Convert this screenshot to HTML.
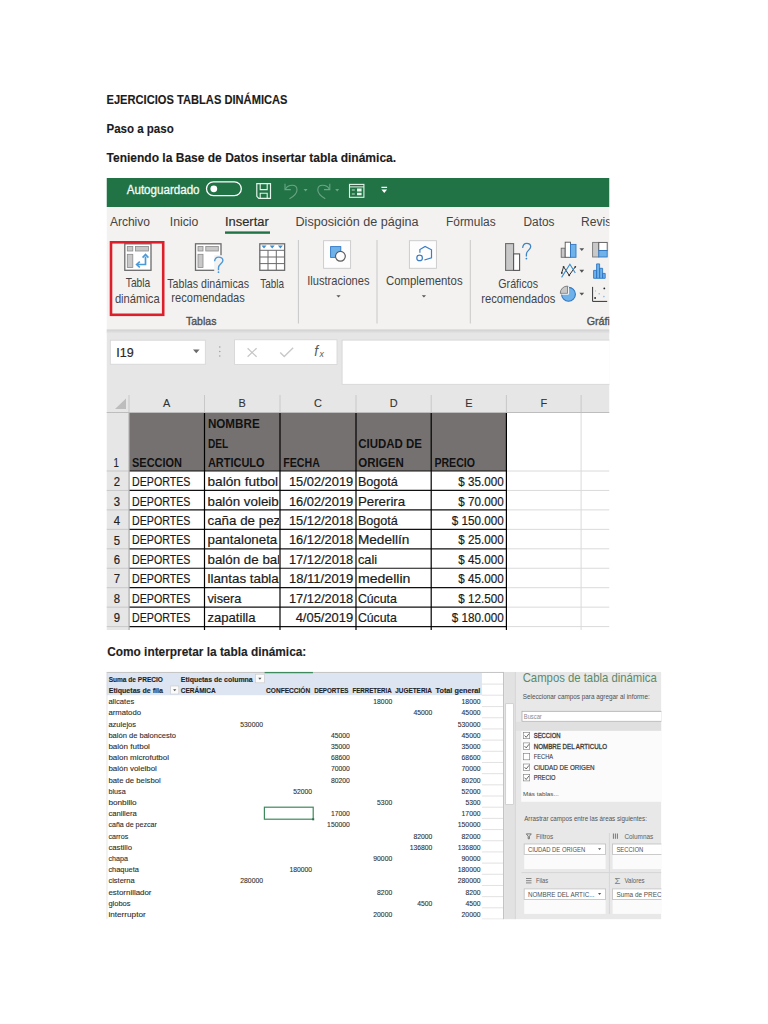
<!DOCTYPE html>
<html><head><meta charset="utf-8"><title>Tablas dinámicas</title>
<style>
html,body{margin:0;padding:0;background:#fff;width:768px;height:1024px;overflow:hidden}
svg{display:block}
text{font-family:"Liberation Sans",sans-serif}
</style></head><body>
<svg width="768" height="1024" viewBox="0 0 768 1024">
<defs><linearGradient id="shd" x1="0" y1="0" x2="0" y2="1"><stop offset="0" stop-color="#d0d0d0"/><stop offset="1" stop-color="#e6e6e6"/></linearGradient></defs>
<text x="106.50" y="104.20" font-size="12.94" fill="#1b1b1b" stroke="#1b1b1b" stroke-width="0.12" font-weight="bold" textLength="181.00" lengthAdjust="spacingAndGlyphs">EJERCICIOS TABLAS DINÁMICAS</text>
<text x="106.50" y="133.20" font-size="12.50" fill="#1b1b1b" stroke="#1b1b1b" stroke-width="0.12" font-weight="bold" textLength="67.20" lengthAdjust="spacingAndGlyphs">Paso a paso</text>
<text x="106.50" y="161.90" font-size="12.50" fill="#1b1b1b" stroke="#1b1b1b" stroke-width="0.12" font-weight="bold" textLength="289.60" lengthAdjust="spacingAndGlyphs">Teniendo la Base de Datos insertar tabla dinámica.</text>
<text x="107.20" y="655.90" font-size="13.23" fill="#222222" stroke="#222222" stroke-width="0.12" font-weight="bold" textLength="199.10" lengthAdjust="spacingAndGlyphs">Como interpretar la tabla dinámica:</text>
<g id="xl">
<clipPath id="c1"><rect x="106.5" y="178" width="503.0" height="452"/></clipPath>
<g clip-path="url(#c1)">
<rect x="106.50" y="178.00" width="503.00" height="29.00" fill="#217346"/>
<text x="126.70" y="193.75" font-size="12.21" fill="#f4fbf6" textLength="72.90" lengthAdjust="spacingAndGlyphs" stroke="#f4fbf6" stroke-width="0.3">Autoguardado</text>
<rect x="206.50" y="181.90" width="34.80" height="13.70" fill="none" stroke="#fff" stroke-width="1.3" rx="6.85"/>
<circle cx="213.8" cy="188.8" r="3.4" fill="#fff"/>
<path d="M256.8 183.7 h13.7 v14.6 h-11.7 l-2 -2z" fill="none" stroke="#e4f5e9" stroke-width="1.2"/>
<path d="M260.2 183.7 v5.9 h7 v-5.9 M260.2 198.3 v-5 h7 v5" fill="none" stroke="#e4f5e9" stroke-width="1.1"/>
<g fill="none" stroke="#6aa584" stroke-width="1.1">
<path d="M285 183.8 V189.6 H290.8"/><path d="M285.4 189.2 C288 184.2 297 183.5 297 190 C297 193.5 293.5 196.5 289.5 198.8"/>
<path d="M329.8 183.8 V189.6 H324"/><path d="M329.4 189.2 C326.8 184.2 317.8 183.5 317.8 190 C317.8 193.5 321.3 196.5 325.3 198.8"/>
</g>
<path d="M303.6 189 h4 l-2 2.4z M335.2 189 h4 l-2 2.4z" fill="#6aa584"/>
<rect x="349.5" y="184.4" width="14.4" height="12.9" fill="none" stroke="#e4f5e9" stroke-width="1.1"/>
<path d="M349.5 186.9 h14.4" stroke="#e4f5e9" stroke-width="1"/>
<path d="M351.8 190 h3 M351.8 194 h3" stroke="#c5e3cf" stroke-width="1.1"/>
<path d="M357 188.6 h4.6 v2.8 h-4.6z M357 192.7 h4.6 v2.6 h-4.6z" fill="#e4f5e9"/>
<path d="M381.4 187.4 h5.7" stroke="#fff" stroke-width="1.1"/><path d="M381.4 189.5 h5.7 l-2.85 3.6z" fill="#fff"/>
<rect x="106.50" y="207.00" width="503.00" height="122.50" fill="#f3f2f1"/>
<text x="109.90" y="226.00" font-size="13.23" fill="#444444" textLength="40.10" lengthAdjust="spacingAndGlyphs">Archivo</text>
<text x="169.80" y="226.00" font-size="13.23" fill="#444444" textLength="28.60" lengthAdjust="spacingAndGlyphs">Inicio</text>
<text x="225.00" y="226.00" font-size="13.23" fill="#2b2b2b" textLength="43.70" lengthAdjust="spacingAndGlyphs" stroke="#2b2b2b" stroke-width="0.15">Insertar</text>
<rect x="225.00" y="231.40" width="45.00" height="2.40" fill="#217346"/>
<text x="295.50" y="226.00" font-size="13.23" fill="#444444" textLength="123.10" lengthAdjust="spacingAndGlyphs">Disposición de página</text>
<text x="446.00" y="226.00" font-size="13.23" fill="#444444" textLength="49.60" lengthAdjust="spacingAndGlyphs">Fórmulas</text>
<text x="523.50" y="226.00" font-size="13.23" fill="#444444" textLength="31.00" lengthAdjust="spacingAndGlyphs">Datos</text>
<text x="581.00" y="226.00" font-size="13.23" fill="#444444" textLength="41.00" lengthAdjust="spacingAndGlyphs">Revisar</text>
<rect x="124.80" y="243.80" width="26.20" height="26.50" fill="#fff" stroke="#6b6b6b" stroke-width="1.3"/>
<rect x="127.30" y="246.40" width="5.50" height="4.60" fill="#c8c8c8" stroke="#8a8a8a" stroke-width="0.8"/>
<rect x="135.40" y="246.40" width="13.10" height="4.60" fill="#c8c8c8" stroke="#8a8a8a" stroke-width="0.8"/>
<rect x="127.30" y="254.30" width="5.50" height="13.20" fill="#c8c8c8" stroke="#8a8a8a" stroke-width="0.8"/>
<path d="M137 264.5 h8.5 v-8" fill="none" stroke="#4a9ad8" stroke-width="1.7"/>
<path d="M142.6 257.6 l2.9 -3.2 l2.9 3.2 M139.8 261.6 l-3.2 2.9 l3.2 2.9" fill="none" stroke="#4a9ad8" stroke-width="1.6"/>
<text x="125.80" y="287.00" font-size="12.06" fill="#444444" textLength="24.50" lengthAdjust="spacingAndGlyphs">Tabla</text>
<text x="114.90" y="302.50" font-size="12.06" fill="#444444" textLength="44.80" lengthAdjust="spacingAndGlyphs">dinámica</text>
<rect x="111.00" y="242.30" width="52.20" height="72.50" fill="none" stroke="#dc1f2a" stroke-width="2.6"/>
<rect x="195.50" y="243.80" width="25.50" height="26.50" fill="#fff" stroke="#6b6b6b" stroke-width="1.3"/>
<rect x="198.00" y="246.40" width="5.00" height="4.60" fill="#c8c8c8" stroke="#8a8a8a" stroke-width="0.8"/>
<rect x="205.80" y="246.40" width="12.50" height="4.60" fill="#c8c8c8" stroke="#8a8a8a" stroke-width="0.8"/>
<rect x="198.00" y="254.30" width="5.00" height="13.20" fill="#c8c8c8" stroke="#8a8a8a" stroke-width="0.8"/>
<rect x="214.20" y="255.20" width="9.00" height="16.00" fill="#f3f2f1"/>
<path d="M214.6 261.3 C214.9 258.3 216.6 257.1 218.6 257.1 C221 257.1 222.9 258.6 222.9 260.6 C222.9 263.4 218.5 264.4 218.5 267.7 V270.2" fill="none" stroke="#4a98d8" stroke-width="1.4"/>
<circle cx="218.5" cy="272.2" r="0.9" fill="#4a98d8"/>
<text x="167.30" y="287.50" font-size="12.06" fill="#444444" textLength="81.70" lengthAdjust="spacingAndGlyphs">Tablas dinámicas</text>
<text x="171.30" y="302.40" font-size="12.06" fill="#444444" textLength="73.50" lengthAdjust="spacingAndGlyphs">recomendadas</text>
<rect x="259.80" y="243.80" width="24.80" height="26.50" fill="#fff" stroke="#6b6b6b" stroke-width="1.3"/>
<path d="M259.8 250.3 h24.8 M259.8 257 h24.8 M259.8 263.6 h24.8 M268 250.3 v20 M276.3 250.3 v20" stroke="#6b6b6b" stroke-width="1"/>
<path d="M261.5 245.5 h5 l-2.5 3z M269.7 245.5 h5 l-2.5 3z M277.9 245.5 h5 l-2.5 3z" fill="#3a8fd0"/>
<text x="260.30" y="287.50" font-size="12.06" fill="#444444" textLength="23.70" lengthAdjust="spacingAndGlyphs">Tabla</text>
<text x="186.00" y="324.60" font-size="11.19" fill="#505050" textLength="30.40" lengthAdjust="spacingAndGlyphs" stroke="#505050" stroke-width="0.35">Tablas</text>
<line x1="298.40" y1="240.00" x2="298.40" y2="323.50" stroke="#c8c8c8" stroke-width="1" />
<line x1="377.00" y1="240.00" x2="377.00" y2="323.50" stroke="#c8c8c8" stroke-width="1" />
<line x1="470.30" y1="240.00" x2="470.30" y2="323.50" stroke="#c8c8c8" stroke-width="1" />
<rect x="323.60" y="240.70" width="27.00" height="27.60" fill="#fdfdfd" stroke="#c9c9c9" stroke-width="0.9"/>
<rect x="330.60" y="246.60" width="10.20" height="10.80" fill="#6fb2ea" stroke="#2f78c4" stroke-width="0.9"/>
<circle cx="340.4" cy="256.3" r="4.9" fill="#fdfdfd" stroke="#5c5c5c" stroke-width="1.2"/>
<text x="307.20" y="285.40" font-size="12.06" fill="#444444" textLength="62.30" lengthAdjust="spacingAndGlyphs">Ilustraciones</text>
<path d="M336.4 295.2 h4.2 l-2.1 2.4z" fill="#555"/>
<rect x="409.40" y="240.70" width="27.00" height="27.60" fill="#fdfdfd" stroke="#c9c9c9" stroke-width="0.9"/>
<path d="M419.9 252.7 V249.5 L425.1 246.4 L431.5 249.8 V257.9 L424.4 260" fill="none" stroke="#3b7cc4" stroke-width="1.2"/>
<circle cx="419.6" cy="257.9" r="2.8" fill="none" stroke="#3b7cc4" stroke-width="1.2"/>
<text x="385.90" y="285.40" font-size="12.06" fill="#444444" textLength="76.70" lengthAdjust="spacingAndGlyphs">Complementos</text>
<path d="M421.8 295.2 h4.2 l-2.1 2.4z" fill="#555"/>
<rect x="505.60" y="243.60" width="8.00" height="26.80" fill="#c8c8c8" stroke="#6b6b6b" stroke-width="1.1"/>
<rect x="513.60" y="253.90" width="6.00" height="16.50" fill="#fff" stroke="#555" stroke-width="1.1"/>
<path d="M522.6 247.9 C523 244.5 525 243.3 526.7 243.3 C529 243.3 530.7 244.8 530.7 246.8 C530.7 249.6 526.4 250.8 526.4 254 V256.4" fill="none" stroke="#3d85c6" stroke-width="1.3"/>
<circle cx="526.4" cy="258.6" r="0.9" fill="#3d85c6"/>
<text x="498.30" y="287.50" font-size="12.06" fill="#444444" textLength="39.70" lengthAdjust="spacingAndGlyphs">Gráficos</text>
<text x="481.30" y="302.60" font-size="12.06" fill="#444444" textLength="74.00" lengthAdjust="spacingAndGlyphs">recomendados</text>
<rect x="561.20" y="248.20" width="4.00" height="9.10" fill="#c8c8c8" stroke="#6b6b6b" stroke-width="0.9"/>
<rect x="565.20" y="242.20" width="5.30" height="15.10" fill="#ffffff" stroke="#555555" stroke-width="0.9"/>
<rect x="570.50" y="244.40" width="5.50" height="12.90" fill="#6fb2ea" stroke="#2f78c4" stroke-width="0.9"/>
<path d="M579.4 248.2 h4.8 l-2.4 2.9z M579.4 269.8 h4.8 l-2.4 2.9z M579.4 292.7 h4.8 l-2.4 2.9z" fill="#555"/>
<path d="M561.6 273 L563.6 266.8 L569.2 275.3 L575.3 266.8" fill="none" stroke="#333" stroke-width="1"/>
<path d="M561.6 277.4 L569.9 264.3 L575.3 273" fill="none" stroke="#3a8fd0" stroke-width="1.1"/>
<circle cx="561.8" cy="273" r="0.9" fill="#333"/><circle cx="563.6" cy="266.8" r="0.9" fill="#333"/><circle cx="569.2" cy="275.3" r="0.9" fill="#333"/><circle cx="575.3" cy="266.8" r="0.9" fill="#333"/>
<circle cx="568.5" cy="294.3" r="6.9" fill="#6fb2ea" stroke="#2f78c4" stroke-width="1.1"/>
<path d="M567.6 293.4 v-7.3 a7 7 0 0 0 -7.3 7.3z" fill="#c8c8c8" stroke="#777" stroke-width="0.9"/>
<path d="M568.5 294.3 v-7.2 M568.5 294.3 h-7.2" stroke="#f3f2f1" stroke-width="1.1"/>
<rect x="592.60" y="242.40" width="6.20" height="14.60" fill="#c8c8c8" stroke="#777" stroke-width="0.9"/>
<rect x="598.80" y="242.40" width="8.40" height="8.10" fill="#ffffff" stroke="#555" stroke-width="0.9"/>
<rect x="598.80" y="250.50" width="8.40" height="6.50" fill="#6fb2ea" stroke="#2f78c4" stroke-width="0.9"/>
<path d="M593.6 278.3 v-7.9 h3 v7.9z M596.6 278.3 v-14.4 h3 v14.4z M599.6 278.3 v-10 h3 v10z M602.6 278.3 v-4.9 h2.6 v4.9z" fill="#6fb2ea" stroke="#2f78c4" stroke-width="0.9"/>
<path d="M592.6 286.9 v14.5 h14.6" fill="none" stroke="#333" stroke-width="1"/>
<circle cx="595.1" cy="298" r="0.9" fill="#222"/><circle cx="604.3" cy="288.4" r="0.9" fill="#222"/><circle cx="599.2" cy="293.8" r="0.8" fill="#8ab8e0"/><circle cx="603.9" cy="296.6" r="0.8" fill="#8ab8e0"/><circle cx="595.5" cy="291" r="0.7" fill="#a8c8e8"/>
<text x="586.70" y="324.70" font-size="11.19" fill="#505050" textLength="40.00" lengthAdjust="spacingAndGlyphs" stroke="#505050" stroke-width="0.35">Gráficos</text>
<rect x="106.50" y="329.50" width="503.00" height="64.00" fill="#e6e6e6"/>
<rect x="106.5" y="329.5" width="503.0" height="4" fill="url(#shd)"/>
<rect x="110.30" y="340.20" width="95.00" height="24.00" fill="#ffffff" stroke="#d4d4d4" stroke-width="0.8"/>
<text x="116.30" y="357.00" font-size="12.21" fill="#2a2a2a" textLength="17.40" lengthAdjust="spacingAndGlyphs" stroke="#2a2a2a" stroke-width="0.2">I19</text>
<path d="M193 349.6 h6.6 l-3.3 3.6z" fill="#6a6a6a"/>
<circle cx="219.8" cy="347" r="0.7" fill="#999"/>
<circle cx="219.8" cy="351.5" r="0.7" fill="#999"/>
<circle cx="219.8" cy="356" r="0.7" fill="#999"/>
<rect x="234.60" y="339.80" width="102.40" height="24.70" fill="#ffffff" stroke="#d4d4d4" stroke-width="0.8"/>
<path d="M247.6 348.2 l9 8.6 M256.6 348.2 l-9 8.6" stroke="#c6c6c6" stroke-width="1.2"/>
<path d="M280.2 352.6 l4 4 l9 -8.8" fill="none" stroke="#c8c8c8" stroke-width="1.4"/>
<text x="314.30" y="356.30" font-size="13.81" fill="#5a5a5a" font-style="italic" font-family="Liberation Serif">f</text>
<text x="319.60" y="356.60" font-size="8.72" fill="#5a5a5a" font-style="italic" font-family="Liberation Serif">x</text>
<rect x="342.10" y="340.10" width="270.00" height="44.20" fill="#ffffff" stroke="#d4d4d4" stroke-width="0.8"/>
<rect x="106.50" y="393.00" width="503.00" height="20.00" fill="#e6e6e6"/>
<path d="M115 409 l11 -10.5 v10.5z" fill="#bdbdbd"/>
<text x="166.75" y="407.20" font-size="10.90" fill="#333" text-anchor="middle" stroke="#333" stroke-width="0.1">A</text>
<text x="242.25" y="407.20" font-size="10.90" fill="#333" text-anchor="middle" stroke="#333" stroke-width="0.1">B</text>
<text x="318.00" y="407.20" font-size="10.90" fill="#333" text-anchor="middle" stroke="#333" stroke-width="0.1">C</text>
<text x="393.60" y="407.20" font-size="10.90" fill="#333" text-anchor="middle" stroke="#333" stroke-width="0.1">D</text>
<text x="468.80" y="407.20" font-size="10.90" fill="#333" text-anchor="middle" stroke="#333" stroke-width="0.1">E</text>
<text x="543.75" y="407.20" font-size="10.90" fill="#333" text-anchor="middle" stroke="#333" stroke-width="0.1">F</text>
<text x="618.55" y="407.20" font-size="10.90" fill="#333" text-anchor="middle" stroke="#333" stroke-width="0.1">G</text>
<line x1="129.00" y1="395.00" x2="129.00" y2="413.00" stroke="#c8c8c8" stroke-width="1" />
<line x1="204.50" y1="395.00" x2="204.50" y2="413.00" stroke="#c8c8c8" stroke-width="1" />
<line x1="280.00" y1="395.00" x2="280.00" y2="413.00" stroke="#c8c8c8" stroke-width="1" />
<line x1="356.00" y1="395.00" x2="356.00" y2="413.00" stroke="#c8c8c8" stroke-width="1" />
<line x1="431.20" y1="395.00" x2="431.20" y2="413.00" stroke="#c8c8c8" stroke-width="1" />
<line x1="506.40" y1="395.00" x2="506.40" y2="413.00" stroke="#c8c8c8" stroke-width="1" />
<line x1="581.10" y1="395.00" x2="581.10" y2="413.00" stroke="#c8c8c8" stroke-width="1" />
<line x1="106.50" y1="412.50" x2="609.50" y2="412.50" stroke="#bdbdbd" stroke-width="1" />
<rect x="106.50" y="413.00" width="22.50" height="217.00" fill="#e6e6e6"/>
<line x1="129.00" y1="413.00" x2="129.00" y2="630.00" stroke="#c8c8c8" stroke-width="1" />
<rect x="129.00" y="413.00" width="480.50" height="217.00" fill="#ffffff"/>
<line x1="506.40" y1="471.00" x2="609.50" y2="471.00" stroke="#dadada" stroke-width="1" />
<line x1="106.50" y1="471.00" x2="129.00" y2="471.00" stroke="#c8c8c8" stroke-width="1" />
<line x1="506.40" y1="490.45" x2="609.50" y2="490.45" stroke="#dadada" stroke-width="1" />
<line x1="106.50" y1="490.45" x2="129.00" y2="490.45" stroke="#c8c8c8" stroke-width="1" />
<line x1="506.40" y1="509.90" x2="609.50" y2="509.90" stroke="#dadada" stroke-width="1" />
<line x1="106.50" y1="509.90" x2="129.00" y2="509.90" stroke="#c8c8c8" stroke-width="1" />
<line x1="506.40" y1="529.35" x2="609.50" y2="529.35" stroke="#dadada" stroke-width="1" />
<line x1="106.50" y1="529.35" x2="129.00" y2="529.35" stroke="#c8c8c8" stroke-width="1" />
<line x1="506.40" y1="548.80" x2="609.50" y2="548.80" stroke="#dadada" stroke-width="1" />
<line x1="106.50" y1="548.80" x2="129.00" y2="548.80" stroke="#c8c8c8" stroke-width="1" />
<line x1="506.40" y1="568.25" x2="609.50" y2="568.25" stroke="#dadada" stroke-width="1" />
<line x1="106.50" y1="568.25" x2="129.00" y2="568.25" stroke="#c8c8c8" stroke-width="1" />
<line x1="506.40" y1="587.70" x2="609.50" y2="587.70" stroke="#dadada" stroke-width="1" />
<line x1="106.50" y1="587.70" x2="129.00" y2="587.70" stroke="#c8c8c8" stroke-width="1" />
<line x1="506.40" y1="607.15" x2="609.50" y2="607.15" stroke="#dadada" stroke-width="1" />
<line x1="106.50" y1="607.15" x2="129.00" y2="607.15" stroke="#c8c8c8" stroke-width="1" />
<line x1="506.40" y1="626.60" x2="609.50" y2="626.60" stroke="#dadada" stroke-width="1" />
<line x1="106.50" y1="626.60" x2="129.00" y2="626.60" stroke="#c8c8c8" stroke-width="1" />
<line x1="506.40" y1="646.05" x2="609.50" y2="646.05" stroke="#dadada" stroke-width="1" />
<line x1="106.50" y1="646.05" x2="129.00" y2="646.05" stroke="#c8c8c8" stroke-width="1" />
<line x1="581.10" y1="413.00" x2="581.10" y2="630.00" stroke="#dadada" stroke-width="1" />
<rect x="129.00" y="413.00" width="377.40" height="58.00" fill="#767171"/>
<text x="132.00" y="466.80" font-size="12.35" fill="#111" font-weight="bold" textLength="50.00" lengthAdjust="spacingAndGlyphs">SECCION</text>
<text x="207.90" y="428.00" font-size="12.35" fill="#111" font-weight="bold" textLength="51.80" lengthAdjust="spacingAndGlyphs">NOMBRE</text>
<text x="207.90" y="447.70" font-size="12.35" fill="#111" font-weight="bold" textLength="20.30" lengthAdjust="spacingAndGlyphs">DEL</text>
<text x="207.90" y="467.00" font-size="12.35" fill="#111" font-weight="bold" textLength="56.70" lengthAdjust="spacingAndGlyphs">ARTICULO</text>
<text x="283.30" y="467.00" font-size="12.35" fill="#111" font-weight="bold" textLength="36.50" lengthAdjust="spacingAndGlyphs">FECHA</text>
<text x="358.30" y="447.70" font-size="12.35" fill="#111" font-weight="bold" textLength="63.60" lengthAdjust="spacingAndGlyphs">CIUDAD DE</text>
<text x="358.30" y="467.00" font-size="12.35" fill="#111" font-weight="bold" textLength="45.40" lengthAdjust="spacingAndGlyphs">ORIGEN</text>
<text x="434.40" y="467.00" font-size="12.35" fill="#111" font-weight="bold" textLength="40.60" lengthAdjust="spacingAndGlyphs">PRECIO</text>
<text x="113.50" y="466.80" font-size="12.06" fill="#222222" textLength="5.40" lengthAdjust="spacingAndGlyphs" stroke="#222" stroke-width="0.15">1</text>
<clipPath id="cB"><rect x="204.5" y="413" width="74.5" height="217"/></clipPath>
<text x="113.70" y="486.20" font-size="12.06" fill="#222222" stroke="#222222" stroke-width="0.18" textLength="6.30" lengthAdjust="spacingAndGlyphs" stroke="#222" stroke-width="0.15">2</text>
<text x="132.10" y="486.10" font-size="12.14" fill="#1a1a1a" stroke="#1a1a1a" stroke-width="0.18" textLength="58.30" lengthAdjust="spacingAndGlyphs">DEPORTES</text>
<g clip-path="url(#cB)">
<text x="207.50" y="486.10" font-size="12.14" fill="#1a1a1a" stroke="#1a1a1a" stroke-width="0.18" textLength="70.60" lengthAdjust="spacingAndGlyphs">balón futbol</text>
</g>
<text x="353.20" y="486.10" font-size="12.14" fill="#1a1a1a" stroke="#1a1a1a" stroke-width="0.18" text-anchor="end" textLength="64.30" lengthAdjust="spacingAndGlyphs">15/02/2019</text>
<text x="357.90" y="486.10" font-size="12.14" fill="#1a1a1a" stroke="#1a1a1a" stroke-width="0.18" textLength="40.00" lengthAdjust="spacingAndGlyphs">Bogotá</text>
<text x="503.75" y="486.10" font-size="12.14" fill="#1a1a1a" stroke="#1a1a1a" stroke-width="0.18" text-anchor="end" textLength="45.40" lengthAdjust="spacingAndGlyphs">$ 35.000</text>
<text x="113.70" y="505.65" font-size="12.06" fill="#222222" stroke="#222222" stroke-width="0.18" textLength="6.30" lengthAdjust="spacingAndGlyphs" stroke="#222" stroke-width="0.15">3</text>
<text x="132.10" y="505.55" font-size="12.14" fill="#1a1a1a" stroke="#1a1a1a" stroke-width="0.18" textLength="58.30" lengthAdjust="spacingAndGlyphs">DEPORTES</text>
<g clip-path="url(#cB)">
<text x="207.50" y="505.55" font-size="12.14" fill="#1a1a1a" stroke="#1a1a1a" stroke-width="0.18" textLength="81.65" lengthAdjust="spacingAndGlyphs">balón voleibol</text>
</g>
<text x="353.20" y="505.55" font-size="12.14" fill="#1a1a1a" stroke="#1a1a1a" stroke-width="0.18" text-anchor="end" textLength="64.30" lengthAdjust="spacingAndGlyphs">16/02/2019</text>
<text x="357.90" y="505.55" font-size="12.14" fill="#1a1a1a" stroke="#1a1a1a" stroke-width="0.18" textLength="47.30" lengthAdjust="spacingAndGlyphs">Pererira</text>
<text x="503.75" y="505.55" font-size="12.14" fill="#1a1a1a" stroke="#1a1a1a" stroke-width="0.18" text-anchor="end" textLength="45.40" lengthAdjust="spacingAndGlyphs">$ 70.000</text>
<text x="113.70" y="525.10" font-size="12.06" fill="#222222" stroke="#222222" stroke-width="0.18" textLength="6.30" lengthAdjust="spacingAndGlyphs" stroke="#222" stroke-width="0.15">4</text>
<text x="132.10" y="525.00" font-size="12.14" fill="#1a1a1a" stroke="#1a1a1a" stroke-width="0.18" textLength="58.30" lengthAdjust="spacingAndGlyphs">DEPORTES</text>
<g clip-path="url(#cB)">
<text x="207.50" y="525.00" font-size="12.14" fill="#1a1a1a" stroke="#1a1a1a" stroke-width="0.18" textLength="91.29" lengthAdjust="spacingAndGlyphs">caña de pezcar</text>
</g>
<text x="353.20" y="525.00" font-size="12.14" fill="#1a1a1a" stroke="#1a1a1a" stroke-width="0.18" text-anchor="end" textLength="64.30" lengthAdjust="spacingAndGlyphs">15/12/2018</text>
<text x="357.90" y="525.00" font-size="12.14" fill="#1a1a1a" stroke="#1a1a1a" stroke-width="0.18" textLength="40.00" lengthAdjust="spacingAndGlyphs">Bogotá</text>
<text x="503.75" y="525.00" font-size="12.14" fill="#1a1a1a" stroke="#1a1a1a" stroke-width="0.18" text-anchor="end" textLength="52.00" lengthAdjust="spacingAndGlyphs">$ 150.000</text>
<text x="113.70" y="544.55" font-size="12.06" fill="#222222" stroke="#222222" stroke-width="0.18" textLength="6.30" lengthAdjust="spacingAndGlyphs" stroke="#222" stroke-width="0.15">5</text>
<text x="132.10" y="544.45" font-size="12.14" fill="#1a1a1a" stroke="#1a1a1a" stroke-width="0.18" textLength="58.30" lengthAdjust="spacingAndGlyphs">DEPORTES</text>
<g clip-path="url(#cB)">
<text x="207.50" y="544.45" font-size="12.14" fill="#1a1a1a" stroke="#1a1a1a" stroke-width="0.18" textLength="69.80" lengthAdjust="spacingAndGlyphs">pantaloneta</text>
</g>
<text x="353.20" y="544.45" font-size="12.14" fill="#1a1a1a" stroke="#1a1a1a" stroke-width="0.18" text-anchor="end" textLength="64.30" lengthAdjust="spacingAndGlyphs">16/12/2018</text>
<text x="357.90" y="544.45" font-size="12.14" fill="#1a1a1a" stroke="#1a1a1a" stroke-width="0.18" textLength="51.50" lengthAdjust="spacingAndGlyphs">Medellín</text>
<text x="503.75" y="544.45" font-size="12.14" fill="#1a1a1a" stroke="#1a1a1a" stroke-width="0.18" text-anchor="end" textLength="45.40" lengthAdjust="spacingAndGlyphs">$ 25.000</text>
<text x="113.70" y="564.00" font-size="12.06" fill="#222222" stroke="#222222" stroke-width="0.18" textLength="6.30" lengthAdjust="spacingAndGlyphs" stroke="#222" stroke-width="0.15">6</text>
<text x="132.10" y="563.90" font-size="12.14" fill="#1a1a1a" stroke="#1a1a1a" stroke-width="0.18" textLength="58.30" lengthAdjust="spacingAndGlyphs">DEPORTES</text>
<g clip-path="url(#cB)">
<text x="207.50" y="563.90" font-size="12.14" fill="#1a1a1a" stroke="#1a1a1a" stroke-width="0.18" textLength="119.51" lengthAdjust="spacingAndGlyphs">balón de baloncesto</text>
</g>
<text x="353.20" y="563.90" font-size="12.14" fill="#1a1a1a" stroke="#1a1a1a" stroke-width="0.18" text-anchor="end" textLength="64.30" lengthAdjust="spacingAndGlyphs">17/12/2018</text>
<text x="357.90" y="563.90" font-size="12.14" fill="#1a1a1a" stroke="#1a1a1a" stroke-width="0.18" textLength="19.20" lengthAdjust="spacingAndGlyphs">cali</text>
<text x="503.75" y="563.90" font-size="12.14" fill="#1a1a1a" stroke="#1a1a1a" stroke-width="0.18" text-anchor="end" textLength="45.40" lengthAdjust="spacingAndGlyphs">$ 45.000</text>
<text x="113.70" y="583.45" font-size="12.06" fill="#222222" stroke="#222222" stroke-width="0.18" textLength="6.30" lengthAdjust="spacingAndGlyphs" stroke="#222" stroke-width="0.15">7</text>
<text x="132.10" y="583.35" font-size="12.14" fill="#1a1a1a" stroke="#1a1a1a" stroke-width="0.18" textLength="58.30" lengthAdjust="spacingAndGlyphs">DEPORTES</text>
<g clip-path="url(#cB)">
<text x="207.50" y="583.35" font-size="12.14" fill="#1a1a1a" stroke="#1a1a1a" stroke-width="0.18" textLength="77.92" lengthAdjust="spacingAndGlyphs">llantas tablas</text>
</g>
<text x="353.20" y="583.35" font-size="12.14" fill="#1a1a1a" stroke="#1a1a1a" stroke-width="0.18" text-anchor="end" textLength="64.30" lengthAdjust="spacingAndGlyphs">18/11/2019</text>
<text x="357.90" y="583.35" font-size="12.14" fill="#1a1a1a" stroke="#1a1a1a" stroke-width="0.18" textLength="52.50" lengthAdjust="spacingAndGlyphs">medellin</text>
<text x="503.75" y="583.35" font-size="12.14" fill="#1a1a1a" stroke="#1a1a1a" stroke-width="0.18" text-anchor="end" textLength="45.40" lengthAdjust="spacingAndGlyphs">$ 45.000</text>
<text x="113.70" y="602.90" font-size="12.06" fill="#222222" stroke="#222222" stroke-width="0.18" textLength="6.30" lengthAdjust="spacingAndGlyphs" stroke="#222" stroke-width="0.15">8</text>
<text x="132.10" y="602.80" font-size="12.14" fill="#1a1a1a" stroke="#1a1a1a" stroke-width="0.18" textLength="58.30" lengthAdjust="spacingAndGlyphs">DEPORTES</text>
<g clip-path="url(#cB)">
<text x="207.50" y="602.80" font-size="12.14" fill="#1a1a1a" stroke="#1a1a1a" stroke-width="0.18" textLength="33.90" lengthAdjust="spacingAndGlyphs">visera</text>
</g>
<text x="353.20" y="602.80" font-size="12.14" fill="#1a1a1a" stroke="#1a1a1a" stroke-width="0.18" text-anchor="end" textLength="64.30" lengthAdjust="spacingAndGlyphs">17/12/2018</text>
<text x="357.90" y="602.80" font-size="12.14" fill="#1a1a1a" stroke="#1a1a1a" stroke-width="0.18" textLength="39.00" lengthAdjust="spacingAndGlyphs">Cúcuta</text>
<text x="503.75" y="602.80" font-size="12.14" fill="#1a1a1a" stroke="#1a1a1a" stroke-width="0.18" text-anchor="end" textLength="45.40" lengthAdjust="spacingAndGlyphs">$ 12.500</text>
<text x="113.70" y="622.35" font-size="12.06" fill="#222222" stroke="#222222" stroke-width="0.18" textLength="6.30" lengthAdjust="spacingAndGlyphs" stroke="#222" stroke-width="0.15">9</text>
<text x="132.10" y="622.25" font-size="12.14" fill="#1a1a1a" stroke="#1a1a1a" stroke-width="0.18" textLength="58.30" lengthAdjust="spacingAndGlyphs">DEPORTES</text>
<g clip-path="url(#cB)">
<text x="207.50" y="622.25" font-size="12.14" fill="#1a1a1a" stroke="#1a1a1a" stroke-width="0.18" textLength="48.00" lengthAdjust="spacingAndGlyphs">zapatilla</text>
</g>
<text x="353.20" y="622.25" font-size="12.14" fill="#1a1a1a" stroke="#1a1a1a" stroke-width="0.18" text-anchor="end" textLength="57.50" lengthAdjust="spacingAndGlyphs">4/05/2019</text>
<text x="357.90" y="622.25" font-size="12.14" fill="#1a1a1a" stroke="#1a1a1a" stroke-width="0.18" textLength="39.00" lengthAdjust="spacingAndGlyphs">Cúcuta</text>
<text x="503.75" y="622.25" font-size="12.14" fill="#1a1a1a" stroke="#1a1a1a" stroke-width="0.18" text-anchor="end" textLength="52.00" lengthAdjust="spacingAndGlyphs">$ 180.000</text>
<line x1="129.00" y1="471.00" x2="507.00" y2="471.00" stroke="#111" stroke-width="1.2" />
<line x1="129.00" y1="490.45" x2="507.00" y2="490.45" stroke="#111" stroke-width="1.2" />
<line x1="129.00" y1="509.90" x2="507.00" y2="509.90" stroke="#111" stroke-width="1.2" />
<line x1="129.00" y1="529.35" x2="507.00" y2="529.35" stroke="#111" stroke-width="1.2" />
<line x1="129.00" y1="548.80" x2="507.00" y2="548.80" stroke="#111" stroke-width="1.2" />
<line x1="129.00" y1="568.25" x2="507.00" y2="568.25" stroke="#111" stroke-width="1.2" />
<line x1="129.00" y1="587.70" x2="507.00" y2="587.70" stroke="#111" stroke-width="1.2" />
<line x1="129.00" y1="607.15" x2="507.00" y2="607.15" stroke="#111" stroke-width="1.2" />
<line x1="129.00" y1="626.60" x2="507.00" y2="626.60" stroke="#111" stroke-width="1.2" />
<line x1="129.00" y1="646.05" x2="507.00" y2="646.05" stroke="#111" stroke-width="1.2" />
<line x1="129.20" y1="413.00" x2="129.20" y2="630.00" stroke="#a8a8a8" stroke-width="1" />
<line x1="204.50" y1="413.00" x2="204.50" y2="630.00" stroke="#000" stroke-width="1.2" />
<line x1="280.00" y1="413.00" x2="280.00" y2="630.00" stroke="#000" stroke-width="1.2" />
<line x1="356.00" y1="413.00" x2="356.00" y2="630.00" stroke="#000" stroke-width="1.2" />
<line x1="431.20" y1="413.00" x2="431.20" y2="630.00" stroke="#000" stroke-width="1.2" />
<line x1="506.40" y1="413.00" x2="506.40" y2="630.00" stroke="#000" stroke-width="1.2" />
</g></g>
<clipPath id="c2"><rect x="106.5" y="671.8" width="554.9" height="247.60000000000002"/></clipPath>
<g clip-path="url(#c2)">
<rect x="106.50" y="671.80" width="397.10" height="247.60" fill="#ffffff"/>
<rect x="106.50" y="671.80" width="375.40" height="23.40" fill="#dde4f2"/>
<line x1="106.50" y1="672.30" x2="503.60" y2="672.30" stroke="#c6c6c6" stroke-width="1.2" />
<line x1="264.60" y1="672.50" x2="312.90" y2="672.50" stroke="#3d8a5c" stroke-width="1.6" />
<line x1="106.80" y1="671.80" x2="106.80" y2="919.40" stroke="#d0d0d0" stroke-width="0.8" />
<line x1="481.90" y1="684.10" x2="503.60" y2="684.10" stroke="#dadada" stroke-width="0.8" />
<line x1="481.90" y1="695.20" x2="503.60" y2="695.20" stroke="#dadada" stroke-width="0.8" />
<line x1="481.90" y1="706.58" x2="503.60" y2="706.58" stroke="#dadada" stroke-width="0.8" />
<line x1="481.90" y1="717.76" x2="503.60" y2="717.76" stroke="#dadada" stroke-width="0.8" />
<line x1="481.90" y1="728.94" x2="503.60" y2="728.94" stroke="#dadada" stroke-width="0.8" />
<line x1="481.90" y1="740.12" x2="503.60" y2="740.12" stroke="#dadada" stroke-width="0.8" />
<line x1="481.90" y1="751.30" x2="503.60" y2="751.30" stroke="#dadada" stroke-width="0.8" />
<line x1="481.90" y1="762.48" x2="503.60" y2="762.48" stroke="#dadada" stroke-width="0.8" />
<line x1="481.90" y1="773.66" x2="503.60" y2="773.66" stroke="#dadada" stroke-width="0.8" />
<line x1="481.90" y1="784.84" x2="503.60" y2="784.84" stroke="#dadada" stroke-width="0.8" />
<line x1="481.90" y1="796.02" x2="503.60" y2="796.02" stroke="#dadada" stroke-width="0.8" />
<line x1="481.90" y1="807.20" x2="503.60" y2="807.20" stroke="#dadada" stroke-width="0.8" />
<line x1="481.90" y1="818.38" x2="503.60" y2="818.38" stroke="#dadada" stroke-width="0.8" />
<line x1="481.90" y1="829.56" x2="503.60" y2="829.56" stroke="#dadada" stroke-width="0.8" />
<line x1="481.90" y1="840.74" x2="503.60" y2="840.74" stroke="#dadada" stroke-width="0.8" />
<line x1="481.90" y1="851.92" x2="503.60" y2="851.92" stroke="#dadada" stroke-width="0.8" />
<line x1="481.90" y1="863.10" x2="503.60" y2="863.10" stroke="#dadada" stroke-width="0.8" />
<line x1="481.90" y1="874.28" x2="503.60" y2="874.28" stroke="#dadada" stroke-width="0.8" />
<line x1="481.90" y1="885.46" x2="503.60" y2="885.46" stroke="#dadada" stroke-width="0.8" />
<line x1="481.90" y1="896.64" x2="503.60" y2="896.64" stroke="#dadada" stroke-width="0.8" />
<line x1="481.90" y1="907.82" x2="503.60" y2="907.82" stroke="#dadada" stroke-width="0.8" />
<line x1="481.90" y1="919.00" x2="503.60" y2="919.00" stroke="#dadada" stroke-width="0.8" />
<line x1="503.60" y1="671.80" x2="503.60" y2="919.40" stroke="#bdbdbd" stroke-width="1" />
<text x="108.70" y="681.60" font-size="7.70" fill="#1f1f1f" stroke="#1f1f1f" stroke-width="0.12" font-weight="bold" textLength="54.20" lengthAdjust="spacingAndGlyphs">Suma de PRECIO</text>
<text x="180.75" y="681.60" font-size="7.70" fill="#1f1f1f" stroke="#1f1f1f" stroke-width="0.12" font-weight="bold" textLength="72.00" lengthAdjust="spacingAndGlyphs">Etiquetas de columna</text>
<rect x="255.50" y="674.20" width="8.80" height="8.60" fill="#fbfbfb" stroke="#c8c8c8" stroke-width="0.6"/>
<path d="M258.3 677.8 h3.2 l-1.6 1.9z" fill="#555"/>
<text x="108.70" y="692.60" font-size="7.70" fill="#1f1f1f" stroke="#1f1f1f" stroke-width="0.12" font-weight="bold" textLength="54.20" lengthAdjust="spacingAndGlyphs">Etiquetas de fila</text>
<rect x="170.70" y="686.00" width="8.10" height="8.00" fill="#fbfbfb" stroke="#c8c8c8" stroke-width="0.6"/>
<path d="M273.1 0" />
<path d="M173.1 689.3 h3.2 l-1.6 1.9z" fill="#555"/>
<text x="180.75" y="692.60" font-size="7.70" fill="#1f1f1f" stroke="#1f1f1f" stroke-width="0.12" font-weight="bold" textLength="35.00" lengthAdjust="spacingAndGlyphs">CERÁMICA</text>
<text x="310.20" y="692.60" font-size="7.70" fill="#1f1f1f" stroke="#1f1f1f" stroke-width="0.12" font-weight="bold" text-anchor="end" textLength="44.10" lengthAdjust="spacingAndGlyphs">CONFECCIÓN</text>
<text x="348.50" y="692.60" font-size="7.70" fill="#1f1f1f" stroke="#1f1f1f" stroke-width="0.12" font-weight="bold" text-anchor="end" textLength="34.30" lengthAdjust="spacingAndGlyphs">DEPORTES</text>
<text x="391.70" y="692.60" font-size="7.70" fill="#1f1f1f" stroke="#1f1f1f" stroke-width="0.12" font-weight="bold" text-anchor="end" textLength="39.30" lengthAdjust="spacingAndGlyphs">FERRETERIA</text>
<text x="431.90" y="692.60" font-size="7.70" fill="#1f1f1f" stroke="#1f1f1f" stroke-width="0.12" font-weight="bold" text-anchor="end" textLength="36.60" lengthAdjust="spacingAndGlyphs">JUGETERIA</text>
<text x="480.40" y="692.60" font-size="7.70" fill="#1f1f1f" stroke="#1f1f1f" stroke-width="0.12" font-weight="bold" text-anchor="end" textLength="44.90" lengthAdjust="spacingAndGlyphs">Total general</text>
<text x="108.40" y="704.20" font-size="7.20" fill="#2e2e2e" stroke="#2e2e2e" stroke-width="0.1" textLength="25.80" lengthAdjust="spacingAndGlyphs">alicates</text>
<text x="392.20" y="704.20" font-size="7.20" fill="#2e2e2e" stroke="#2e2e2e" stroke-width="0.1" text-anchor="end" textLength="18.90" lengthAdjust="spacingAndGlyphs">18000</text>
<text x="480.50" y="704.20" font-size="7.20" fill="#2e2e2e" stroke="#2e2e2e" stroke-width="0.1" text-anchor="end" textLength="18.90" lengthAdjust="spacingAndGlyphs">18000</text>
<text x="108.40" y="715.40" font-size="7.20" fill="#2e2e2e" stroke="#2e2e2e" stroke-width="0.1" textLength="32.60" lengthAdjust="spacingAndGlyphs">armatodo</text>
<text x="432.40" y="715.40" font-size="7.20" fill="#2e2e2e" stroke="#2e2e2e" stroke-width="0.1" text-anchor="end" textLength="18.90" lengthAdjust="spacingAndGlyphs">45000</text>
<text x="480.50" y="715.40" font-size="7.20" fill="#2e2e2e" stroke="#2e2e2e" stroke-width="0.1" text-anchor="end" textLength="18.90" lengthAdjust="spacingAndGlyphs">45000</text>
<text x="108.40" y="726.60" font-size="7.20" fill="#2e2e2e" stroke="#2e2e2e" stroke-width="0.1" textLength="27.70" lengthAdjust="spacingAndGlyphs">azulejos</text>
<text x="263.00" y="726.60" font-size="7.20" fill="#2e2e2e" stroke="#2e2e2e" stroke-width="0.1" text-anchor="end" textLength="22.68" lengthAdjust="spacingAndGlyphs">530000</text>
<text x="480.50" y="726.60" font-size="7.20" fill="#2e2e2e" stroke="#2e2e2e" stroke-width="0.1" text-anchor="end" textLength="22.68" lengthAdjust="spacingAndGlyphs">530000</text>
<text x="108.40" y="737.80" font-size="7.20" fill="#2e2e2e" stroke="#2e2e2e" stroke-width="0.1" textLength="67.60" lengthAdjust="spacingAndGlyphs">balón de baloncesto</text>
<text x="349.80" y="737.80" font-size="7.20" fill="#2e2e2e" stroke="#2e2e2e" stroke-width="0.1" text-anchor="end" textLength="18.90" lengthAdjust="spacingAndGlyphs">45000</text>
<text x="480.50" y="737.80" font-size="7.20" fill="#2e2e2e" stroke="#2e2e2e" stroke-width="0.1" text-anchor="end" textLength="18.90" lengthAdjust="spacingAndGlyphs">45000</text>
<text x="108.40" y="749.00" font-size="7.20" fill="#2e2e2e" stroke="#2e2e2e" stroke-width="0.1" textLength="41.50" lengthAdjust="spacingAndGlyphs">balón futbol</text>
<text x="349.80" y="749.00" font-size="7.20" fill="#2e2e2e" stroke="#2e2e2e" stroke-width="0.1" text-anchor="end" textLength="18.90" lengthAdjust="spacingAndGlyphs">35000</text>
<text x="480.50" y="749.00" font-size="7.20" fill="#2e2e2e" stroke="#2e2e2e" stroke-width="0.1" text-anchor="end" textLength="18.90" lengthAdjust="spacingAndGlyphs">35000</text>
<text x="108.40" y="760.20" font-size="7.20" fill="#2e2e2e" stroke="#2e2e2e" stroke-width="0.1" textLength="60.60" lengthAdjust="spacingAndGlyphs">balon microfutbol</text>
<text x="349.80" y="760.20" font-size="7.20" fill="#2e2e2e" stroke="#2e2e2e" stroke-width="0.1" text-anchor="end" textLength="18.90" lengthAdjust="spacingAndGlyphs">68600</text>
<text x="480.50" y="760.20" font-size="7.20" fill="#2e2e2e" stroke="#2e2e2e" stroke-width="0.1" text-anchor="end" textLength="18.90" lengthAdjust="spacingAndGlyphs">68600</text>
<text x="108.40" y="771.40" font-size="7.20" fill="#2e2e2e" stroke="#2e2e2e" stroke-width="0.1" textLength="48.50" lengthAdjust="spacingAndGlyphs">balón voleibol</text>
<text x="349.80" y="771.40" font-size="7.20" fill="#2e2e2e" stroke="#2e2e2e" stroke-width="0.1" text-anchor="end" textLength="18.90" lengthAdjust="spacingAndGlyphs">70000</text>
<text x="480.50" y="771.40" font-size="7.20" fill="#2e2e2e" stroke="#2e2e2e" stroke-width="0.1" text-anchor="end" textLength="18.90" lengthAdjust="spacingAndGlyphs">70000</text>
<text x="108.40" y="782.60" font-size="7.20" fill="#2e2e2e" stroke="#2e2e2e" stroke-width="0.1" textLength="52.40" lengthAdjust="spacingAndGlyphs">bate de beisbol</text>
<text x="349.80" y="782.60" font-size="7.20" fill="#2e2e2e" stroke="#2e2e2e" stroke-width="0.1" text-anchor="end" textLength="18.90" lengthAdjust="spacingAndGlyphs">80200</text>
<text x="480.50" y="782.60" font-size="7.20" fill="#2e2e2e" stroke="#2e2e2e" stroke-width="0.1" text-anchor="end" textLength="18.90" lengthAdjust="spacingAndGlyphs">80200</text>
<text x="108.40" y="793.80" font-size="7.20" fill="#2e2e2e" stroke="#2e2e2e" stroke-width="0.1" textLength="17.30" lengthAdjust="spacingAndGlyphs">blusa</text>
<text x="312.10" y="793.80" font-size="7.20" fill="#2e2e2e" stroke="#2e2e2e" stroke-width="0.1" text-anchor="end" textLength="18.90" lengthAdjust="spacingAndGlyphs">52000</text>
<text x="480.50" y="793.80" font-size="7.20" fill="#2e2e2e" stroke="#2e2e2e" stroke-width="0.1" text-anchor="end" textLength="18.90" lengthAdjust="spacingAndGlyphs">52000</text>
<text x="108.40" y="805.00" font-size="7.20" fill="#2e2e2e" stroke="#2e2e2e" stroke-width="0.1" textLength="28.30" lengthAdjust="spacingAndGlyphs">bonbillo</text>
<text x="392.20" y="805.00" font-size="7.20" fill="#2e2e2e" stroke="#2e2e2e" stroke-width="0.1" text-anchor="end" textLength="15.12" lengthAdjust="spacingAndGlyphs">5300</text>
<text x="480.50" y="805.00" font-size="7.20" fill="#2e2e2e" stroke="#2e2e2e" stroke-width="0.1" text-anchor="end" textLength="15.12" lengthAdjust="spacingAndGlyphs">5300</text>
<text x="108.40" y="816.20" font-size="7.20" fill="#2e2e2e" stroke="#2e2e2e" stroke-width="0.1" textLength="28.50" lengthAdjust="spacingAndGlyphs">canillera</text>
<text x="349.80" y="816.20" font-size="7.20" fill="#2e2e2e" stroke="#2e2e2e" stroke-width="0.1" text-anchor="end" textLength="18.90" lengthAdjust="spacingAndGlyphs">17000</text>
<text x="480.50" y="816.20" font-size="7.20" fill="#2e2e2e" stroke="#2e2e2e" stroke-width="0.1" text-anchor="end" textLength="18.90" lengthAdjust="spacingAndGlyphs">17000</text>
<text x="108.40" y="827.40" font-size="7.20" fill="#2e2e2e" stroke="#2e2e2e" stroke-width="0.1" textLength="48.50" lengthAdjust="spacingAndGlyphs">caña de pezcar</text>
<text x="349.80" y="827.40" font-size="7.20" fill="#2e2e2e" stroke="#2e2e2e" stroke-width="0.1" text-anchor="end" textLength="22.68" lengthAdjust="spacingAndGlyphs">150000</text>
<text x="480.50" y="827.40" font-size="7.20" fill="#2e2e2e" stroke="#2e2e2e" stroke-width="0.1" text-anchor="end" textLength="22.68" lengthAdjust="spacingAndGlyphs">150000</text>
<text x="108.40" y="838.60" font-size="7.20" fill="#2e2e2e" stroke="#2e2e2e" stroke-width="0.1" textLength="19.90" lengthAdjust="spacingAndGlyphs">carros</text>
<text x="432.40" y="838.60" font-size="7.20" fill="#2e2e2e" stroke="#2e2e2e" stroke-width="0.1" text-anchor="end" textLength="18.90" lengthAdjust="spacingAndGlyphs">82000</text>
<text x="480.50" y="838.60" font-size="7.20" fill="#2e2e2e" stroke="#2e2e2e" stroke-width="0.1" text-anchor="end" textLength="18.90" lengthAdjust="spacingAndGlyphs">82000</text>
<text x="108.40" y="849.80" font-size="7.20" fill="#2e2e2e" stroke="#2e2e2e" stroke-width="0.1" textLength="23.60" lengthAdjust="spacingAndGlyphs">castillo</text>
<text x="432.40" y="849.80" font-size="7.20" fill="#2e2e2e" stroke="#2e2e2e" stroke-width="0.1" text-anchor="end" textLength="22.68" lengthAdjust="spacingAndGlyphs">136800</text>
<text x="480.50" y="849.80" font-size="7.20" fill="#2e2e2e" stroke="#2e2e2e" stroke-width="0.1" text-anchor="end" textLength="22.68" lengthAdjust="spacingAndGlyphs">136800</text>
<text x="108.40" y="861.00" font-size="7.20" fill="#2e2e2e" stroke="#2e2e2e" stroke-width="0.1" textLength="19.50" lengthAdjust="spacingAndGlyphs">chapa</text>
<text x="392.20" y="861.00" font-size="7.20" fill="#2e2e2e" stroke="#2e2e2e" stroke-width="0.1" text-anchor="end" textLength="18.90" lengthAdjust="spacingAndGlyphs">90000</text>
<text x="480.50" y="861.00" font-size="7.20" fill="#2e2e2e" stroke="#2e2e2e" stroke-width="0.1" text-anchor="end" textLength="18.90" lengthAdjust="spacingAndGlyphs">90000</text>
<text x="108.40" y="872.20" font-size="7.20" fill="#2e2e2e" stroke="#2e2e2e" stroke-width="0.1" textLength="30.50" lengthAdjust="spacingAndGlyphs">chaqueta</text>
<text x="312.10" y="872.20" font-size="7.20" fill="#2e2e2e" stroke="#2e2e2e" stroke-width="0.1" text-anchor="end" textLength="22.68" lengthAdjust="spacingAndGlyphs">180000</text>
<text x="480.50" y="872.20" font-size="7.20" fill="#2e2e2e" stroke="#2e2e2e" stroke-width="0.1" text-anchor="end" textLength="22.68" lengthAdjust="spacingAndGlyphs">180000</text>
<text x="108.40" y="883.40" font-size="7.20" fill="#2e2e2e" stroke="#2e2e2e" stroke-width="0.1" textLength="26.30" lengthAdjust="spacingAndGlyphs">cisterna</text>
<text x="263.00" y="883.40" font-size="7.20" fill="#2e2e2e" stroke="#2e2e2e" stroke-width="0.1" text-anchor="end" textLength="22.68" lengthAdjust="spacingAndGlyphs">280000</text>
<text x="480.50" y="883.40" font-size="7.20" fill="#2e2e2e" stroke="#2e2e2e" stroke-width="0.1" text-anchor="end" textLength="22.68" lengthAdjust="spacingAndGlyphs">280000</text>
<text x="108.40" y="894.60" font-size="7.20" fill="#2e2e2e" stroke="#2e2e2e" stroke-width="0.1" textLength="43.10" lengthAdjust="spacingAndGlyphs">estornillador</text>
<text x="392.20" y="894.60" font-size="7.20" fill="#2e2e2e" stroke="#2e2e2e" stroke-width="0.1" text-anchor="end" textLength="15.12" lengthAdjust="spacingAndGlyphs">8200</text>
<text x="480.50" y="894.60" font-size="7.20" fill="#2e2e2e" stroke="#2e2e2e" stroke-width="0.1" text-anchor="end" textLength="15.12" lengthAdjust="spacingAndGlyphs">8200</text>
<text x="108.40" y="905.80" font-size="7.20" fill="#2e2e2e" stroke="#2e2e2e" stroke-width="0.1" textLength="22.10" lengthAdjust="spacingAndGlyphs">globos</text>
<text x="432.40" y="905.80" font-size="7.20" fill="#2e2e2e" stroke="#2e2e2e" stroke-width="0.1" text-anchor="end" textLength="15.12" lengthAdjust="spacingAndGlyphs">4500</text>
<text x="480.50" y="905.80" font-size="7.20" fill="#2e2e2e" stroke="#2e2e2e" stroke-width="0.1" text-anchor="end" textLength="15.12" lengthAdjust="spacingAndGlyphs">4500</text>
<text x="108.40" y="917.00" font-size="7.20" fill="#2e2e2e" stroke="#2e2e2e" stroke-width="0.1" textLength="37.30" lengthAdjust="spacingAndGlyphs">interruptor</text>
<text x="392.20" y="917.00" font-size="7.20" fill="#2e2e2e" stroke="#2e2e2e" stroke-width="0.1" text-anchor="end" textLength="18.90" lengthAdjust="spacingAndGlyphs">20000</text>
<text x="480.50" y="917.00" font-size="7.20" fill="#2e2e2e" stroke="#2e2e2e" stroke-width="0.1" text-anchor="end" textLength="18.90" lengthAdjust="spacingAndGlyphs">20000</text>
<rect x="264.40" y="807.20" width="48.80" height="12.00" fill="none" stroke="#3d8a5c" stroke-width="1.2"/>
<rect x="312.20" y="818.30" width="2.00" height="2.00" fill="#2f6e48"/>
<rect x="504.10" y="671.80" width="11.00" height="247.60" fill="#e2e2e2"/>
<rect x="505.70" y="703.70" width="7.90" height="100.80" fill="#ffffff" stroke="#c6c6c6" stroke-width="0.7"/>
<line x1="515.40" y1="671.80" x2="515.40" y2="919.40" stroke="#d2d2d2" stroke-width="1" />
<rect x="515.90" y="671.80" width="145.50" height="247.60" fill="#e8e8e8"/>
<text x="522.70" y="681.50" font-size="13.40" fill="#5a8a6c" textLength="134.00" lengthAdjust="spacingAndGlyphs">Campos de tabla dinámica</text>
<text x="522.70" y="699.00" font-size="6.60" fill="#505050" textLength="127.00" lengthAdjust="spacingAndGlyphs">Seleccionar campos para agregar al informe:</text>
<rect x="522.00" y="711.30" width="140.00" height="10.00" fill="#ffffff" stroke="#acacac" stroke-width="0.8"/>
<text x="523.80" y="718.80" font-size="6.40" fill="#8a8a8a" textLength="18.00" lengthAdjust="spacingAndGlyphs">Buscar</text>
<rect x="516.00" y="721.80" width="145.40" height="9.10" fill="#e0e0e0"/>
<rect x="521.20" y="730.90" width="140.30" height="70.90" fill="#fbfbfb"/>
<rect x="523.30" y="732.30" width="6.40" height="6.40" fill="#ffffff" stroke="#7a7a7a" stroke-width="0.6"/>
<path d="M524.6 735.50 l1.6 1.8 l2.8 -3.6" fill="none" stroke="#444" stroke-width="0.8"/>
<text x="533.70" y="737.90" font-size="6.80" fill="#3a3a3a" textLength="26.90" lengthAdjust="spacingAndGlyphs" stroke="#3a3a3a" stroke-width="0.3">SECCION</text>
<rect x="523.30" y="742.90" width="6.40" height="6.40" fill="#ffffff" stroke="#7a7a7a" stroke-width="0.6"/>
<path d="M524.6 746.10 l1.6 1.8 l2.8 -3.6" fill="none" stroke="#444" stroke-width="0.8"/>
<text x="533.70" y="748.50" font-size="6.80" fill="#3a3a3a" textLength="73.30" lengthAdjust="spacingAndGlyphs" stroke="#3a3a3a" stroke-width="0.3">NOMBRE DEL ARTICULO</text>
<rect x="523.30" y="753.40" width="6.40" height="6.40" fill="#ffffff" stroke="#7a7a7a" stroke-width="0.6"/>
<text x="533.70" y="759.00" font-size="6.80" fill="#3a3a3a" textLength="19.40" lengthAdjust="spacingAndGlyphs" stroke="#3a3a3a" stroke-width="0.08">FECHA</text>
<rect x="523.30" y="764.00" width="6.40" height="6.40" fill="#ffffff" stroke="#7a7a7a" stroke-width="0.6"/>
<path d="M524.6 767.20 l1.6 1.8 l2.8 -3.6" fill="none" stroke="#444" stroke-width="0.8"/>
<text x="533.70" y="769.60" font-size="6.80" fill="#3a3a3a" textLength="60.90" lengthAdjust="spacingAndGlyphs" stroke="#3a3a3a" stroke-width="0.2">CIUDAD DE ORIGEN</text>
<rect x="523.30" y="774.50" width="6.40" height="6.40" fill="#ffffff" stroke="#7a7a7a" stroke-width="0.6"/>
<path d="M524.6 777.70 l1.6 1.8 l2.8 -3.6" fill="none" stroke="#444" stroke-width="0.8"/>
<text x="533.70" y="780.10" font-size="6.80" fill="#3a3a3a" textLength="21.80" lengthAdjust="spacingAndGlyphs" stroke="#3a3a3a" stroke-width="0.2">PRECIO</text>
<text x="523.00" y="795.60" font-size="6.20" fill="#4a4a4a" textLength="35.70" lengthAdjust="spacingAndGlyphs">Más tablas...</text>
<text x="524.20" y="820.50" font-size="6.80" fill="#555555" textLength="122.70" lengthAdjust="spacingAndGlyphs">Arrastrar campos entre las áreas siguientes:</text>
<path d="M526.3 833.9 h5 l-1.9 2.3 v2.6 l-1.2 0 v-2.6z" fill="none" stroke="#6a6a6a" stroke-width="0.9"/>
<text x="535.90" y="838.70" font-size="7.00" fill="#606060" textLength="17.40" lengthAdjust="spacingAndGlyphs">Filtros</text>
<path d="M613.4 833.5 v5.3 M615.4 833.5 v5.3 M617.4 833.5 v5.3" stroke="#777" stroke-width="1"/>
<text x="624.40" y="838.70" font-size="7.00" fill="#606060" textLength="28.90" lengthAdjust="spacingAndGlyphs">Columnas</text>
<path d="M526 878.5 h5.5 M526 880.7 h5.5 M526 882.9 h5.5" stroke="#777" stroke-width="0.9"/>
<text x="535.90" y="883.40" font-size="7.00" fill="#606060" textLength="12.20" lengthAdjust="spacingAndGlyphs">Filas</text>
<text x="614.60" y="884.00" font-size="9.00" fill="#808080" textLength="6.00" lengthAdjust="spacingAndGlyphs" font-family="Liberation Serif">Σ</text>
<text x="624.40" y="883.40" font-size="7.00" fill="#606060" textLength="20.20" lengthAdjust="spacingAndGlyphs">Valores</text>
<rect x="524.20" y="844.00" width="81.40" height="25.00" fill="#fbfbfb"/>
<rect x="524.20" y="844.00" width="81.40" height="10.50" fill="#ffffff" stroke="#bfbfbf" stroke-width="0.8"/>
<rect x="524.20" y="888.90" width="81.40" height="25.00" fill="#fbfbfb"/>
<rect x="524.20" y="888.90" width="81.40" height="10.50" fill="#ffffff" stroke="#bfbfbf" stroke-width="0.8"/>
<rect x="612.60" y="844.00" width="60.00" height="25.00" fill="#fbfbfb"/>
<rect x="612.60" y="844.00" width="60.00" height="10.50" fill="#ffffff" stroke="#bfbfbf" stroke-width="0.8"/>
<rect x="612.60" y="888.90" width="60.00" height="25.00" fill="#fbfbfb"/>
<rect x="612.60" y="888.90" width="60.00" height="10.50" fill="#ffffff" stroke="#bfbfbf" stroke-width="0.8"/>
<line x1="521.50" y1="872.60" x2="661.40" y2="872.60" stroke="#d6d6d6" stroke-width="1" />
<line x1="609.40" y1="833.00" x2="609.40" y2="914.00" stroke="#d6d6d6" stroke-width="1" />
<text x="527.90" y="852.10" font-size="7.40" fill="#505050" textLength="57.30" lengthAdjust="spacingAndGlyphs">CIUDAD DE ORIGEN</text>
<path d="M598 848.2 h3.2 l-1.6 1.9z" fill="#555"/>
<text x="616.40" y="852.10" font-size="7.40" fill="#505050" textLength="27.00" lengthAdjust="spacingAndGlyphs">SECCION</text>
<text x="527.90" y="897.00" font-size="7.40" fill="#505050" textLength="66.50" lengthAdjust="spacingAndGlyphs">NOMBRE DEL ARTIC...</text>
<path d="M598 893.1 h3.2 l-1.6 1.9z" fill="#555"/>
<text x="616.40" y="897.00" font-size="7.40" fill="#505050" textLength="52.00" lengthAdjust="spacingAndGlyphs">Suma de PRECIO</text>
</g>
</svg></body></html>
